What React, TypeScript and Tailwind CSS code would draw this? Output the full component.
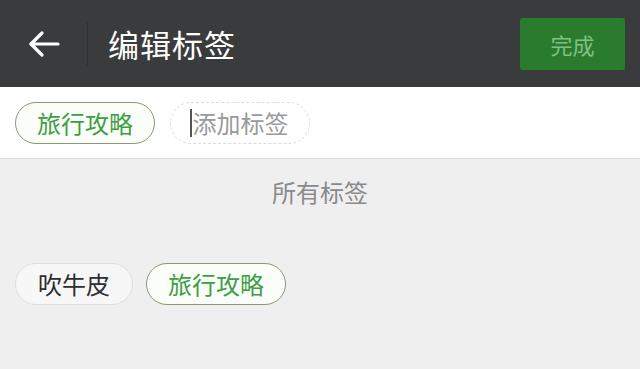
import React from 'react';

const font = { fontFamily: '"Noto Sans CJK SC", "Noto Sans", sans-serif' };

export default function App() {
  return (
    <div className="w-[640px] h-[369px] bg-[#efefef] overflow-hidden" style={font}>
      {/* Header */}
      <div className="h-[87px] bg-[#3a3b3c] flex items-center">
        <div className="w-[87px] h-full flex items-center pl-[28px]">
          <svg width="32" height="28" viewBox="0 0 32 28" fill="none" stroke="#ffffff" strokeWidth="3.2" strokeLinecap="round" strokeLinejoin="round">
            <path d="M3 14 H30" />
            <path d="M14 3 L3 14 L14 25" />
          </svg>
        </div>
        <div className="w-px h-[44px] bg-[#2f3031]" />
        <div className="flex-1 pl-[20px] text-[31px] leading-none text-white tracking-[1px]">编辑标签</div>
        <button className="mr-[15px] w-[105px] h-[52px] rounded-[3px] bg-[#2b7b2f] text-[#80c183] text-[22px] leading-none">
          完成
        </button>
      </div>

      {/* Input tags */}
      <div className="h-[72px] bg-white border-b border-[#d9d9d9] flex items-center px-[15px] gap-[15px]">
        <div className="h-[42px] px-[21px] rounded-full border-[1.5px] border-[#8a9878] bg-[#fbfdf9] flex items-center text-[24px] leading-none text-[#3e9e44]">
          旅行攻略
        </div>
        <div className="h-[42px] w-[140px] pl-[19px] rounded-full border-[1.5px] border-dashed border-[#dcdcdc] flex items-center text-[24px] leading-none text-[#9a9a9a]">
          <span className="w-[1.5px] h-[28px] bg-[#555] mr-[1px]" />
          添加标签
        </div>
      </div>

      {/* All tags */}
      <div className="pt-[21px] text-center text-[24px] leading-none text-[#8a8a8a]">所有标签</div>
      <div className="flex items-center px-[15px] gap-[13px] mt-[59px]">
        <div className="h-[42px] px-[22px] rounded-full border border-[#dedede] bg-[#f7f7f7] flex items-center text-[24px] leading-none text-[#2e2e2e]">
          吹牛皮
        </div>
        <div className="h-[42px] px-[21px] rounded-full border-[1.5px] border-[#8a9878] bg-[#fbfdf9] flex items-center text-[24px] leading-none text-[#3e9e44]">
          旅行攻略
        </div>
      </div>
    </div>
  );
}
